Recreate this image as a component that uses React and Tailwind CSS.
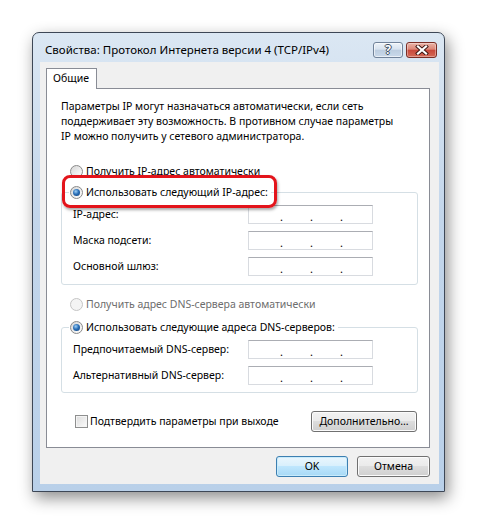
import React from "react";

function Radio({ checked, disabled }) {
  return (
    <span
      className={
        disabled
          ? "flex h-[13px] w-[13px] shrink-0 items-center justify-center rounded-full border border-[#c5c5c5] bg-[#f4f4f4]"
          : "flex h-[13px] w-[13px] shrink-0 items-center justify-center rounded-full border border-[#8a8a8a] bg-[linear-gradient(135deg,#d6d6d6,#ffffff)]"
      }
    >
      {checked && (
        <span className="h-[7px] w-[7px] rounded-full bg-[radial-gradient(circle_at_40%_35%,#9fd0f5_0%,#2a6fb8_45%,#0d3b73_100%)]" />
      )}
    </span>
  );
}

function IpBox() {
  return (
    <div className="flex h-[19px] w-[125px] items-center border border-[#d8dbe0] border-t-[#abadb3] bg-white pt-[4px] text-[11px] leading-none text-black">
      <span className="w-[31px]" />
      <span className="w-[3px] text-center">.</span>
      <span className="w-[27px]" />
      <span className="w-[3px] text-center">.</span>
      <span className="w-[27px]" />
      <span className="w-[3px] text-center">.</span>
    </div>
  );
}

function Row({ label }) {
  return (
    <div className="flex h-[19px] items-center pl-[11px]">
      <span className="w-[175px]">{label}</span>
      <IpBox />
    </div>
  );
}

function Button({ children, primary, className }) {
  return (
    <div
      className={
        (primary
          ? "border-[#3c7fb1] bg-[linear-gradient(#eaf6fd_0%,#d9f0fc_45%,#bee6fd_50%,#a7d9f5_100%)] shadow-[inset_0_0_0_1px_#c9ebfb] "
          : "border-[#707070] bg-[linear-gradient(#f2f2f2_0%,#ebebeb_45%,#dddddd_50%,#cfcfcf_100%)] shadow-[inset_0_0_0_1px_#fbfbfb] ") +
        "flex h-[21px] items-center justify-center rounded-[3px] border text-[10.5px] text-black " +
        (className || "")
      }
    >
      {children}
    </div>
  );
}

export default function App() {
  return (
    <div className="min-h-[525px] w-[478px] bg-white pl-[32px] pt-[32px] font-['Noto_Sans',sans-serif] text-[10.5px] text-black">
      <div className="flex h-[460px] w-[413px] flex-col rounded-t-[7px] border border-[#3d4756] bg-[linear-gradient(#dbe7f3,#c3d6eb_40%,#b9d0e9)] shadow-[3px_6px_16px_rgba(0,0,0,0.45)]">
        {/* title bar */}
        <div className="flex h-[29px] shrink-0 items-start pl-[12px] pr-[7px]">
          <span className="mt-[9px] text-[11.5px] leading-[16px] text-black">
            Свойства: Протокол Интернета версии 4 (TCP/IPv4)
          </span>
          <div className="ml-auto mt-[9px] flex gap-[3px]">
            <div className="flex h-[16px] w-[30px] items-center justify-center rounded-[3px] border border-[#71839a] bg-[linear-gradient(#eef3f9_0%,#d8e3ef_45%,#bccde0_50%,#c9d9ea_100%)] shadow-[inset_0_0_0_1px_rgba(255,255,255,0.6)]">
              <span className="text-[12px] font-bold leading-none text-white [text-shadow:1px_0_0_#3e4d60,-1px_0_0_#3e4d60,0_1px_0_#3e4d60,0_-1px_0_#3e4d60]">
                ?
              </span>
            </div>
            <div className="flex h-[16px] w-[31px] items-center justify-center rounded-[3px] border border-[#7a2d25] bg-[linear-gradient(#eab3a7_0%,#dc8677_45%,#c8473a_50%,#d46a57_100%)] shadow-[inset_0_0_0_1px_rgba(255,255,255,0.35)]">
              <svg width="14" height="10" viewBox="0 0 14 10">
                <path d="M3 1.5 L11 8.5 M11 1.5 L3 8.5" stroke="#3a1410" strokeWidth="4" strokeLinecap="square" />
                <path d="M3 1.5 L11 8.5 M11 1.5 L3 8.5" stroke="#ffffff" strokeWidth="2.2" strokeLinecap="square" />
              </svg>
            </div>
          </div>
        </div>

        {/* client area */}
        <div className="mb-[7px] ml-[7px] mr-[5px] flex flex-1 flex-col bg-[#f0f0f0] pl-[6px] pr-[9px] pt-[6px]">
          <div className="relative z-10 -mb-px flex h-[21px] w-[51px] items-center border border-b-0 border-[#898c95] bg-white pl-[6px]">
            Общие
          </div>
          <div className="relative h-[360px] border border-[#898c95] bg-white">
            <p className="pl-[14px] pt-[10px] leading-[15px]">
              Параметры IP могут назначаться автоматически, если сеть
              <br />
              поддерживает эту возможность. В противном случае параметры
              <br />
              IP можно получить у сетевого администратора.
            </p>

            <div className="mt-[20px] flex h-[15px] items-center gap-[3px] pl-[23px]">
              <Radio />
              <span>Получить IP-адрес автоматически</span>
            </div>

            <div className="ml-[14px] mt-[13px] h-[93px] w-[357px] rounded-[3px] border border-[#d5dfe5]">
              <div className="-mt-[8px] ml-[7px] flex h-[15px] w-fit items-center gap-[3px] bg-white pl-[1px] pr-[3px]">
                <Radio checked />
                <span>Использовать следующий IP-адрес:</span>
              </div>
              <div className="mt-[5px] flex flex-col gap-[7px]">
                <Row label="IP-адрес:" />
                <Row label="Маска подсети:" />
                <Row label="Основной шлюз:" />
              </div>
            </div>

            <div className="mt-[12px] flex h-[15px] items-center gap-[3px] pl-[23px] text-[#6d6d6d]">
              <Radio disabled />
              <span>Получить адрес DNS-сервера автоматически</span>
            </div>

            <div className="ml-[14px] mt-[15px] h-[66px] w-[357px] rounded-[3px] border border-[#d5dfe5]">
              <div className="-mt-[8px] ml-[7px] flex h-[15px] w-fit items-center gap-[3px] bg-white pl-[1px] pr-[3px]">
                <Radio checked />
                <span>Использовать следующие адреса DNS-серверов:</span>
              </div>
              <div className="mt-[5px] flex flex-col gap-[7px]">
                <Row label="Предпочитаемый DNS-сервер:" />
                <Row label="Альтернативный DNS-сервер:" />
              </div>
            </div>

            <div className="mt-[18px] flex h-[21px] items-center pl-[28px] pr-[12px]">
              <span className="h-[13px] w-[13px] shrink-0 border border-[#8e8f8f] bg-[linear-gradient(135deg,#dcdcdc,#fbfbfb)] shadow-[inset_0_0_0_1px_#f4f4f4]" />
              <span className="ml-[2px]">Подтвердить параметры при выходе</span>
              <Button className="ml-auto w-[106px]">Дополнительно...</Button>
            </div>

            {/* red annotation */}
            <div className="pointer-events-none absolute left-[15px] top-[86px] h-[33px] w-[215px] rounded-[8px] border-[3px] border-[#e3141b] shadow-[1px_2px_3px_rgba(0,0,0,0.35)]" />
          </div>

          <div className="mt-[8px] flex justify-end gap-[9px]">
            <Button primary className="w-[72px]">OK</Button>
            <Button className="w-[73px]">Отмена</Button>
          </div>
        </div>
      </div>
    </div>
  );
}
